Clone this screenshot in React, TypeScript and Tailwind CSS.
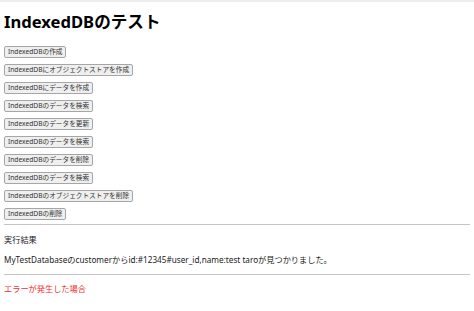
const buttons = [
  "IndexedDBの作成",
  "IndexedDBにオブジェクトストアを作成",
  "IndexedDBにデータを作成",
  "IndexedDBのデータを検索",
  "IndexedDBのデータを更新",
  "IndexedDBのデータを検索",
  "IndexedDBのデータを削除",
  "IndexedDBのデータを検索",
  "IndexedDBのオブジェクトストアを削除",
  "IndexedDBの削除",
];

const App = () => {
  return (
    <div className="min-h-screen bg-white font-['Noto_Sans','Noto_Sans_CJK_JP',sans-serif] text-[#222]">
      <div className="h-[2px] bg-[#ececec]" />
      <div className="px-[4px]">
        <h1 className="mt-[10px] text-[16.6px] font-bold leading-[20px] text-black">IndexedDBのテスト</h1>

        <div className="mt-[14px] flex flex-col items-start gap-[6px]">
          {buttons.map((label, i) => (
            <button
              key={i}
              className="h-[12px] rounded-[2px] border border-[#a6a6a6] bg-[#efefef] px-[3px] text-[6.67px] leading-none text-[#333]"
            >
              {label}
            </button>
          ))}
        </div>

        <div className="mt-[4px] h-px bg-[#c4c4c4]" />

        <p className="mt-[10px] text-[8.2px] leading-[10px]">実行結果</p>
        <p className="mt-[10px] text-[8.2px] leading-[10px]">
          MyTestDatabaseのcustomerからid:#12345#user_id,name:test taroが見つかりました。
        </p>

        <div className="mt-[9px] h-px bg-[#c4c4c4]" />

        <p className="mt-[9px] text-[8.2px] leading-[10px] text-[#f03030]">エラーが発生した場合</p>
      </div>
    </div>
  );
};

export default App;
